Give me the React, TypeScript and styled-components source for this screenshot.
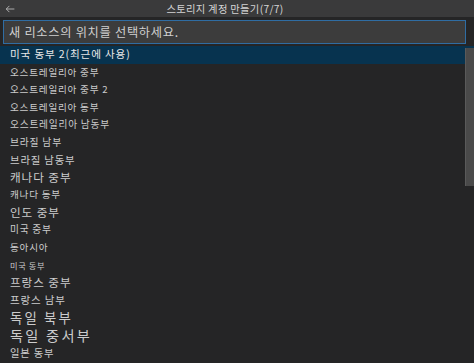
import React from "react";
import styled, { createGlobalStyle } from "styled-components";

const GlobalStyle = createGlobalStyle`
  html, body {
    margin: 0;
    padding: 0;
    background: #252526;
    overflow: hidden;
  }
  body {
    font-family: "Noto Sans CJK KR", "Noto Sans", sans-serif;
    color: #cccccc;
  }
`;

const Widget = styled.div`
  width: 474px;
  height: 363px;
  display: flex;
  flex-direction: column;
  background: #252526;
  overflow: hidden;
`;

const TitleBar = styled.div`
  height: 17px;
  background: #3a3a3b;
  display: grid;
  grid-template-columns: 20px 1fr 20px;
  align-items: center;
`;

const BackButton = styled.div`
  display: flex;
  align-items: center;
  justify-content: center;
  color: #c5c5c5;
`;

const Title = styled.div`
  text-align: center;
  font-size: 10.3px;
  line-height: 17px;
  color: #d4d4d4;
  padding-right: 24px;
  letter-spacing: 0.03em;
`;

const InputRow = styled.div`
  padding: 3px 8px 2px 3px;
`;

const InputBox = styled.div`
  height: 22px;
  border: 1px solid #2f6da3;
  background: #3c3c3c;
  display: flex;
  align-items: center;
  padding-left: 5px;
  font-size: 12.2px;
  letter-spacing: 0.06em;
  color: #d0d0d0;
`;

const List = styled.div`
  display: grid;
  grid-auto-rows: 17.55px;
  position: relative;
`;

const Row = styled.div<{ $selected?: boolean; $size: number; $spacing: number }>`
  display: flex;
  align-items: center;
  padding-left: 10px;
  font-size: ${(p) => p.$size}px;
  line-height: 1;
  letter-spacing: ${(p) => p.$spacing}em;
  white-space: nowrap;
  background: ${(p) => (p.$selected ? "#07334f" : "transparent")};
  color: ${(p) => (p.$selected ? "#e8e8e8" : "#cccccc")};
`;

const Scrollbar = styled.div`
  position: absolute;
  top: 2px;
  right: 0;
  width: 8px;
  height: 138px;
  background: #4a4a4a;
  border-left: 1px solid #5a5a5a;
`;

const items: { label: string; size: number; spacing?: number }[] = [
  { label: "미국 동부 2(최근에 사용)", size: 10.6 },
  { label: "오스트레일리아 중부", size: 9.6 },
  { label: "오스트레일리아 중부 2", size: 9.6 },
  { label: "오스트레일리아 동부", size: 9.6 },
  { label: "오스트레일리아 남동부", size: 9.7 },
  { label: "브라질 남부", size: 9.8 },
  { label: "브라질 남동부", size: 10.4 },
  { label: "캐나다 중부", size: 11.6 },
  { label: "캐나다 동부", size: 9.6 },
  { label: "인도 중부", size: 11.6 },
  { label: "미국 중부", size: 9.7 },
  { label: "동아시아", size: 9.6 },
  { label: "미국 동부", size: 8.2 },
  { label: "프랑스 중부", size: 11.6 },
  { label: "프랑스 남부", size: 10.5 },
  { label: "독일 북부", size: 13.4, spacing: 0.16 },
  { label: "독일 중서부", size: 14.2, spacing: 0.16 },
  { label: "일본 동부", size: 10.3 },
];

export default function App() {
  return (
    <Widget>
      <GlobalStyle />
      <TitleBar>
        <BackButton>
          <svg width="10" height="10" viewBox="0 0 16 16" fill="none">
            <path d="M15 8H2M7 3L2 8l5 5" stroke="currentColor" strokeWidth="1.3" />
          </svg>
        </BackButton>
        <Title>스토리지 계정 만들기(7/7)</Title>
        <div />
      </TitleBar>
      <InputRow>
        <InputBox>새 리소스의 위치를 선택하세요.</InputBox>
      </InputRow>
      <List>
        {items.map((it, i) => (
          <Row
            key={it.label}
            $selected={i === 0}
            $size={it.size}
            $spacing={it.spacing ?? 0.08}
          >
            {it.label}
          </Row>
        ))}
        <Scrollbar />
      </List>
    </Widget>
  );
}
